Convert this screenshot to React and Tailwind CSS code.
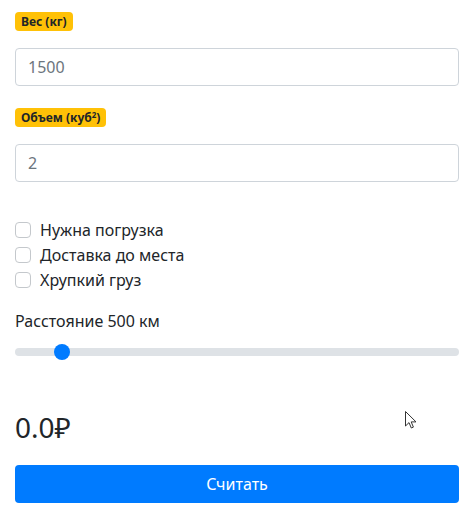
import { useState } from "react";

const Badge = ({ children }) => (
    <span className="block h-[19px] w-fit rounded-[4px] bg-[#ffc107] px-[6px] pt-[3px] text-[12px] font-bold leading-[13px] text-[#212529]">
        {children}
    </span>
)

const Check = ({ label }) => {
    const [on, setOn] = useState(false)
    return (
        <label className="flex h-[25px] items-center gap-[9px]">
            <input
                type="checkbox"
                checked={on}
                onChange={() => setOn(!on)}
                className="h-4 w-4 appearance-none rounded-[4px] border border-[#c4c8cc] bg-white checked:bg-[#007bff]"
            />
            <span>{label}</span>
        </label>
    )
}

const App = () => {
    const [weight, setWeight] = useState("1500")
    const [volume, setVolume] = useState("2")

    return (
        <div className="relative min-h-[520px] bg-white px-[15px] pt-[12px] text-[16px] text-[#212529]"
             style={{ fontFamily: '"Noto Sans", "Open Sans", sans-serif' }}>
            <Badge>Вес (кг)</Badge>
            <input
                className="mt-[17px] block h-[38px] w-full rounded-[4px] border border-[#ced4da] px-3 text-[#6c757d] outline-none"
                value={weight}
                onChange={(e) => setWeight(e.target.value)}
            />

            <div className="mt-[22px]">
                <Badge>Объем (куб<sup className="text-[8px]">2</sup>)</Badge>
            </div>
            <input
                className="mt-[17px] block h-[38px] w-full rounded-[4px] border border-[#ced4da] px-3 text-[#6c757d] outline-none"
                value={volume}
                onChange={(e) => setVolume(e.target.value)}
            />

            <div className="mt-[35px] flex flex-col">
                <Check label="Нужна погрузка" />
                <Check label="Доставка до места" />
                <Check label="Хрупкий груз" />
            </div>

            <div className="mt-[17px] leading-[24px]">Расстояние 500 км</div>

            <div className="relative mt-[11px] flex h-4 items-center">
                <div className="h-2 w-full rounded-full bg-[#dee2e6]" />
                <div className="absolute left-[39px] top-0 h-4 w-4 rounded-full bg-[#007bff]" />
            </div>

            <div className="mt-[50px] text-[28px] leading-[34px]">0.0₽</div>

            <button className="mt-[21px] h-[38px] w-full rounded-[4px] bg-[#007bff] text-white">
                Считать
            </button>

            <svg className="absolute left-[405px] top-[411px]" width="12" height="19" viewBox="0 0 12 19">
                <path d="M0.5 0.5 L0.5 15 L4 11.6 L6.3 17 L8.4 16.1 L6.2 10.9 L11 10.9 Z"
                      fill="white" stroke="#333" strokeWidth="1" strokeLinejoin="round" />
            </svg>
        </div>
    )
}

export default App
